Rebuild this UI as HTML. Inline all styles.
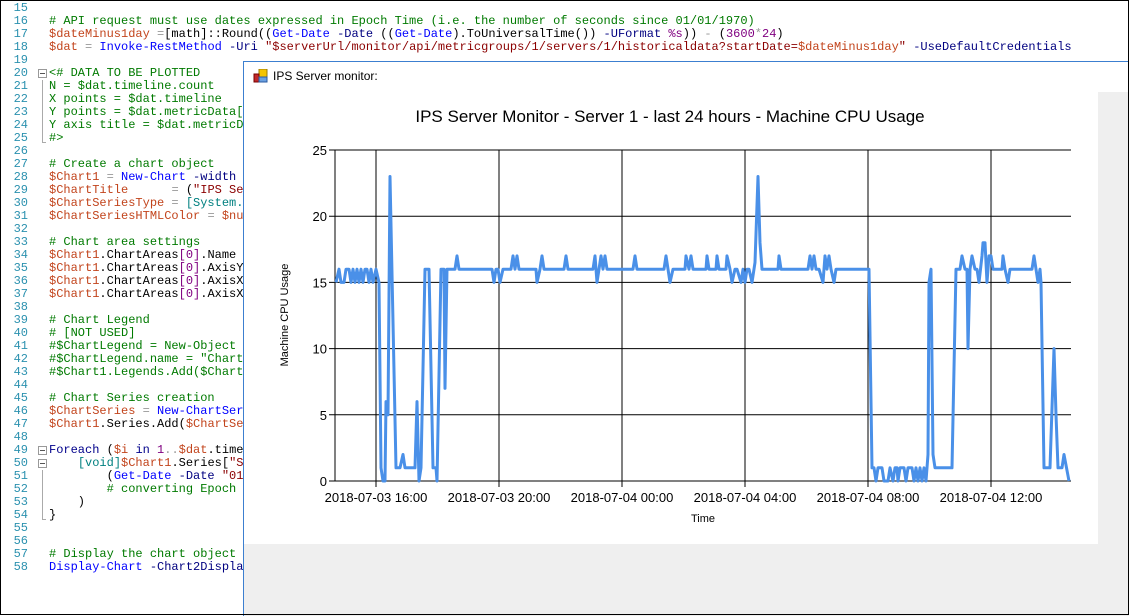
<!DOCTYPE html>
<html><head><meta charset="utf-8"><style>
*{margin:0;padding:0}
body{width:1129px;height:615px;position:relative;overflow:hidden;background:#fff;font-family:"Liberation Sans",sans-serif}
#frame{position:absolute;left:0;top:0;width:1127px;height:613px;border:1px solid #000}
#code{position:absolute;left:0;top:2px;font:12px/13px "Liberation Mono",monospace;white-space:pre}
.ln{position:absolute;left:0;width:28px;text-align:right;color:#2b91af}
.cd{position:absolute;left:49px;color:#000}
.c{color:#007a00}.v{color:#c2441c}.k{color:#0000ff}.p{color:#000080}.s{color:#8b0000}.o{color:#999}.n{color:#800080}.kw{color:#00008b}.t{color:#008080}
.fold{position:absolute;left:38px;width:7px;height:7px;border:1px solid #999;background:#fff}
.fold:after{content:"";position:absolute;left:1px;top:3px;width:5px;height:1px;background:#555}
.vl{position:absolute;left:42px;width:1px;background:#aaa}
#win{position:absolute;left:243px;top:61px;width:886px;height:554px;border-left:1px solid #3c7fd0;border-top:1px solid #3c7fd0;background:#efefef}
#tb{position:absolute;left:0;top:0;width:886px;height:30px;background:#fff}
#chart{position:absolute;left:0;top:30px;width:854px;height:452px;background:#fff}
</style></head><body>
<div id="code"></div>
<div id="win">
 <div id="tb">
  <svg style="position:absolute;left:9px;top:7px" width="15" height="14"><rect x="6" y="0" width="8" height="8" fill="#f5c400" stroke="#9a7a00"/><rect x="1" y="5" width="5" height="8" fill="#c0282a" stroke="#700"/><rect x="6" y="8" width="8" height="5" fill="#6aa0e0" stroke="#2a5aa0"/></svg>
  <div style="position:absolute;left:29px;top:7px;font-size:12px;color:#000">IPS Server monitor:</div>
 </div>
 <div id="chart"></div>
</div>
<svg id="plot" style="position:absolute;left:0;top:0" width="1129" height="615"></svg>
<div id="frame"></div>
<script>
var lines=[
'',
'<span class="c"># API request must use dates expressed in Epoch Time (i.e. the number of seconds since 01/01/1970)</span>',
'<span class="v">$dateMinus1day</span> <span class="o">=</span>[math]::Round((<span class="k">Get-Date</span> <span class="p">-Date</span> ((<span class="k">Get-Date</span>).ToUniversalTime()) <span class="p">-UFormat</span> <span class="n">%s</span>)) <span class="o">-</span> (<span class="n">3600</span><span class="o">*</span><span class="n">24</span>)',
'<span class="v">$dat</span> <span class="o">=</span> <span class="k">Invoke-RestMethod</span> <span class="p">-Uri</span> <span class="s">"$serverUrl/monitor/api/metricgroups/1/servers/1/historicaldata?startDate=</span><span class="v">$dateMinus1day</span><span class="s">"</span> <span class="p">-UseDefaultCredentials</span>',
'',
'<span class="c">&lt;# DATA TO BE PLOTTED</span>',
'<span class="c">N = $dat.timeline.count</span>',
'<span class="c">X points = $dat.timeline</span>',
'<span class="c">Y points = $dat.metricData[</span>',
'<span class="c">Y axis title = $dat.metricD</span>',
'<span class="c">#&gt;</span>',
'',
'<span class="c"># Create a chart object</span>',
'<span class="v">$Chart1</span> <span class="o">=</span> <span class="k">New-Chart</span> <span class="p">-width</span>',
'<span class="v">$ChartTitle</span>      <span class="o">=</span> (<span class="s">"IPS Se</span>',
'<span class="v">$ChartSeriesType</span> <span class="o">=</span> <span class="t">[System.</span>',
'<span class="v">$ChartSeriesHTMLColor</span> <span class="o">=</span> <span class="v">$nu</span>',
'',
'<span class="c"># Chart area settings</span>',
'<span class="v">$Chart1</span>.ChartAreas<span class="n">[0]</span>.Name',
'<span class="v">$Chart1</span>.ChartAreas<span class="n">[0]</span>.AxisY',
'<span class="v">$Chart1</span>.ChartAreas<span class="n">[0]</span>.AxisX',
'<span class="v">$Chart1</span>.ChartAreas<span class="n">[0]</span>.AxisX',
'',
'<span class="c"># Chart Legend</span>',
'<span class="c"># [NOT USED]</span>',
'<span class="c">#$ChartLegend = New-Object</span>',
'<span class="c">#$ChartLegend.name = "Chart</span>',
'<span class="c">#$Chart1.Legends.Add($Chart</span>',
'',
'<span class="c"># Chart Series creation</span>',
'<span class="v">$ChartSeries</span> <span class="o">=</span> <span class="k">New-ChartSer</span>',
'<span class="v">$Chart1</span>.Series.Add(<span class="v">$ChartSe</span>',
'',
'<span class="kw">Foreach</span> (<span class="v">$i</span> <span class="kw">in</span> <span class="n">1</span><span class="o">..</span><span class="v">$dat</span>.time',
'    <span class="t">[void]</span><span class="v">$Chart1</span>.Series[<span class="s">"S</span>',
'        (<span class="k">Get-Date</span> <span class="p">-Date</span> <span class="s">"01</span>',
'        <span class="c"># converting Epoch</span>',
'    )',
'}',
'',
'',
'<span class="c"># Display the chart object</span>',
'<span class="k">Display-Chart</span> <span class="p">-Chart2Displa</span>'];
var h='';
for(var i=0;i<lines.length;i++){var y=i*13;h+='<div class="ln" style="top:'+y+'px">'+(15+i)+'</div><div class="cd" style="top:'+y+'px">'+lines[i]+'</div>';}
h+='<div class="fold" style="top:'+(5*13+2)+'px"></div><div class="vl" style="top:'+(6*13)+'px;height:'+(5*13-3)+'px"></div><div style="position:absolute;left:42px;top:'+(11*13-3)+'px;width:4px;height:1px;background:#aaa"></div>';
h+='<div class="fold" style="top:'+(34*13+2)+'px"></div><div class="fold" style="top:'+(35*13+2)+'px"></div><div class="vl" style="top:'+(36*13)+'px;height:'+(4*13-3)+'px"></div><div style="position:absolute;left:42px;top:'+(40*13-3)+'px;width:4px;height:1px;background:#aaa"></div>';
document.getElementById('code').innerHTML=h;

var s='';
function Y(v){return 481-v*13.24;}
s+='<text x="670" y="122" font-size="17" text-anchor="middle" font-family="Liberation Sans">IPS Server Monitor - Server 1 - last 24 hours - Machine CPU Usage</text>';
for(var v=0;v<=25;v+=5){var y=Y(v);s+='<line x1="329" x2="1071" y1="'+y+'" y2="'+y+'" stroke="#000"/>';s+='<text x="327" y="'+(y+5)+'" font-size="13" text-anchor="end">'+v+'</text>';}
s+='<line x1="335" x2="335" y1="150" y2="481" stroke="#000"/>';
var xs=[376,499,622,745,868,991],lb=['2018-07-03 16:00','2018-07-03 20:00','2018-07-04 00:00','2018-07-04 04:00','2018-07-04 08:00','2018-07-04 12:00'];
for(var i=0;i<6;i++){s+='<line x1="'+xs[i]+'" x2="'+xs[i]+'" y1="150" y2="487" stroke="#000"/>';s+='<text x="'+xs[i]+'" y="502" font-size="13" text-anchor="middle">'+lb[i]+'</text>';}
s+='<text x="703" y="522" font-size="11" text-anchor="middle">Time</text>';
s+='<text transform="translate(288,315) rotate(-90)" font-size="11" text-anchor="middle">Machine CPU Usage</text>';
var d=[[336,15],[339,16],[341,15],[344,15],[346,16],[349,16],[351,15],[353,16],[355,15],[357,16],[359,15],[361,16],[363,15],[365,16],[367,16],[369,15],[371,16],[373,15],[376,16],[379,15],[381,1],[383,0],[385,0],[386,6],[388,5],[390,23],[396,1],[400,1],[403,2],[405,1],[415,1],[417,6],[419,0],[421,1],[425,16],[429,16],[433,1],[436,1],[437,0],[441,16],[444,16],[445,7],[447,16],[455,16],[457,17],[459,16],[492,16],[494,15],[496,16],[498,16],[500,15],[503,16],[511,16],[513,17],[515,16],[517,17],[519,16],[536,16],[537,15],[540,16],[542,17],[544,16],[564,16],[566,17],[568,16],[593,16],[595,17],[597,15],[599,16],[601,17],[603,16],[605,17],[607,16],[633,16],[635,17],[637,16],[664,16],[666,17],[670,15],[673,16],[685,16],[686,17],[689,16],[691,17],[693,16],[706,16],[707,17],[709,16],[716,16],[717,17],[719,16],[726,16],[727,17],[730,16],[732,15],[735,16],[737,16],[741,15],[743,16],[745,15],[747,16],[749,16],[752,15],[755,16.5],[758,23],[760,18],[762,16],[778,16],[779,17],[781,16],[808,16],[810,17],[812,16],[814,17],[816,16],[819,16],[823,15],[825,17],[827,16],[829,17],[831,16],[834,15],[836,16],[867,16],[869,16],[872,1],[874,1],[876,0],[878,1],[882,1],[884,0],[888,0],[890,1],[893,0],[895,1],[897,1],[898,0],[900,1],[904,1],[906,0],[908,1],[912,1],[914,0],[916,1],[918,0],[920,1],[922,0],[924,1],[926,0],[928,2],[929,15],[931,16],[933,2],[935,1],[952,1],[956,16],[960,16],[962,17],[965,16],[967,16],[968,10],[970,16],[972,17],[975,16],[977,16],[979,15],[982,17],[983,18],[985,18],[987,15],[989,17],[991,17],[993,16],[1002,16],[1003,17],[1005,16],[1008,15],[1010,16],[1032,16],[1034,17],[1036,16],[1038,15],[1040,16],[1041,15],[1044,1],[1050,1],[1054,10],[1056,5],[1058,1],[1062,1],[1064,2],[1069,0]];
var pts=d.map(function(p){return p[0]+','+Y(p[1]).toFixed(1)}).join(' ');
s+='<polyline points="'+pts+'" fill="none" stroke="#4a90e8" stroke-width="3" stroke-linejoin="round"/>';
document.getElementById('plot').innerHTML=s;
</script>
</body></html>
